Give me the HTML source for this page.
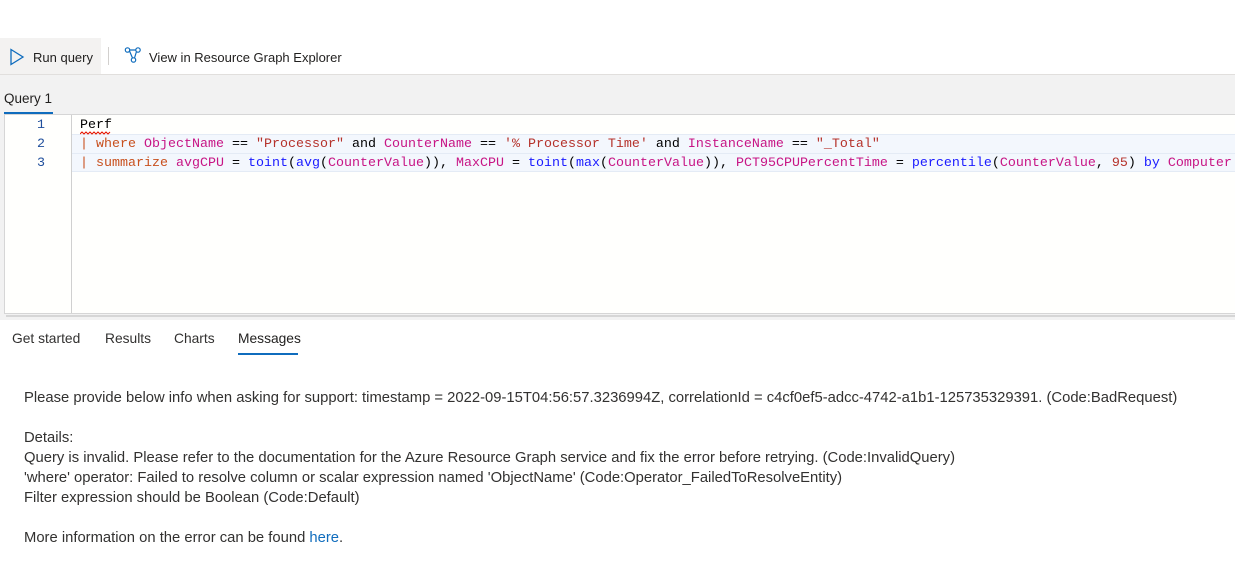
<!DOCTYPE html>
<html><head><meta charset="utf-8"><style>
*{margin:0;padding:0;box-sizing:border-box}
body{width:1235px;height:575px;overflow:hidden;background:#fff;font-family:"Liberation Sans",sans-serif;position:relative;color:#323130}
.abs{position:absolute}
.code{font-family:"Liberation Mono",monospace;font-size:13.33px;white-space:pre;line-height:19px}
.k{color:#c8501e}.n{color:#c71585}.s{color:#b5322b}.f{color:#1a1aff}.b{color:#000}.p{color:#1f4e9c}
.msg{font-size:14.8px;color:#323130;white-space:nowrap}
.tab{font-size:13.8px}
</style></head><body>
<div class="abs" style="left:0;top:38px;width:101px;height:36px;background:#f3f2f1"></div>
<svg class="abs" style="left:9px;top:48px" width="16" height="18" viewBox="0 0 16 18"><path d="M2 1.5 L14 9 L2 16.5 Z" fill="none" stroke="#0f6cbd" stroke-width="1.3"/></svg>
<div class="abs" style="left:33px;top:50px;font-size:13px;color:#201f1e">Run query</div>
<div class="abs" style="left:108px;top:47px;width:1px;height:18px;background:#d2d0ce"></div>
<svg class="abs" style="left:124px;top:46px" width="18" height="18" viewBox="0 0 18 18" fill="none" stroke="#0f6cbd" stroke-width="1.2"><circle cx="3.5" cy="4" r="2.2"/><circle cx="14" cy="4" r="2.2"/><circle cx="9.5" cy="14" r="2.2"/><path d="M5.5 5 L8.5 12 M12.5 5.5 L10.5 12 M5.7 4 L11.8 4"/></svg>
<div class="abs" style="left:149px;top:50px;font-size:13px;color:#201f1e">View in Resource Graph Explorer</div>
<div class="abs" style="left:0;top:74px;width:1235px;height:1px;background:#e1dfdd"></div>
<div class="abs" style="left:0;top:75px;width:1235px;height:245px;background:#f2f2f2"></div>
<div class="abs" style="left:4px;top:91px;font-size:13.5px;color:#201f1e">Query 1</div>
<div class="abs" style="left:4px;top:112px;width:49px;height:2px;background:#0f6cbd"></div>
<div class="abs" style="left:4px;top:114px;width:1231px;height:200px;background:#fffffd;border:1px solid #d6d6d6;border-right:none"></div>
<div class="abs" style="left:71px;top:115px;width:1px;height:198px;background:#d0d0d0"></div>
<div class="abs" style="left:72px;top:134px;width:1163px;height:19px;background:#f3f7fd;border-top:1px solid #e4ebf5"></div>
<div class="abs" style="left:72px;top:153px;width:1163px;height:19px;background:#f3f7fd;border-top:1px solid #e4ebf5;border-bottom:1px solid #e4ebf5"></div>
<div class="abs code p" style="left:37px;top:116px;text-align:right">1
2
3</div>
<div class="abs code" style="left:80px;top:116px"><span class="b">Perf</span>
<span class="k">|</span> <span class="k">where</span> <span class="n">ObjectName</span> <span class="b">==</span> <span class="s">"Processor"</span> <span class="b">and</span> <span class="n">CounterName</span> <span class="b">==</span> <span class="s">'% Processor Time'</span> <span class="b">and</span> <span class="n">InstanceName</span> <span class="b">==</span> <span class="s">"_Total"</span>
<span class="k">|</span> <span class="k">summarize</span> <span class="n">avgCPU</span> <span class="b">=</span> <span class="f">toint</span><span class="b">(</span><span class="f">avg</span><span class="b">(</span><span class="n">CounterValue</span><span class="b">)),</span> <span class="n">MaxCPU</span> <span class="b">=</span> <span class="f">toint</span><span class="b">(</span><span class="f">max</span><span class="b">(</span><span class="n">CounterValue</span><span class="b">)),</span> <span class="n">PCT95CPUPercentTime</span> <span class="b">=</span> <span class="f">percentile</span><span class="b">(</span><span class="n">CounterValue</span><span class="b">,</span> <span class="s">95</span><span class="b">)</span> <span class="f">by</span> <span class="n">Computer</span></div>
<svg class="abs" style="left:80px;top:131px" width="32" height="4"><path d="M0 3 L2 1 L4 3 L6 1 L8 3 L10 1 L12 3 L14 1 L16 3 L18 1 L20 3 L22 1 L24 3 L26 1 L28 3 L30 1" stroke="#e51400" fill="none" stroke-width="1"/></svg>
<div class="abs" style="left:6px;top:315px;width:1229px;height:2px;background:#d6d6d6"></div>
<div class="abs" style="left:4px;top:320px;width:1231px;height:255px;background:#fff"></div>
<div class="abs tab" style="left:12px;top:331px">Get started</div>
<div class="abs tab" style="left:105px;top:331px">Results</div>
<div class="abs tab" style="left:174px;top:331px">Charts</div>
<div class="abs tab" style="left:238px;top:331px;color:#201f1e">Messages</div>
<div class="abs" style="left:238px;top:353px;width:60px;height:2px;background:#0f6cbd"></div>
<div class="abs msg" style="left:24px;top:390px">Please provide below info when asking for support: timestamp = 2022-09-15T04:56:57.3236994Z, correlationId = c4cf0ef5-adcc-4742-a1b1-125735329391. (Code:BadRequest)</div>
<div class="abs msg" style="left:24px;top:430px">Details:</div>
<div class="abs msg" style="left:24px;top:450px">Query is invalid. Please refer to the documentation for the Azure Resource Graph service and fix the error before retrying. (Code:InvalidQuery)</div>
<div class="abs msg" style="left:24px;top:470px">'where' operator: Failed to resolve column or scalar expression named 'ObjectName' (Code:Operator_FailedToResolveEntity)</div>
<div class="abs msg" style="left:24px;top:490px">Filter expression should be Boolean (Code:Default)</div>
<div class="abs msg" style="left:24px;top:530px">More information on the error can be found <span style="color:#0f6cbd">here</span>.</div>
</body></html>
